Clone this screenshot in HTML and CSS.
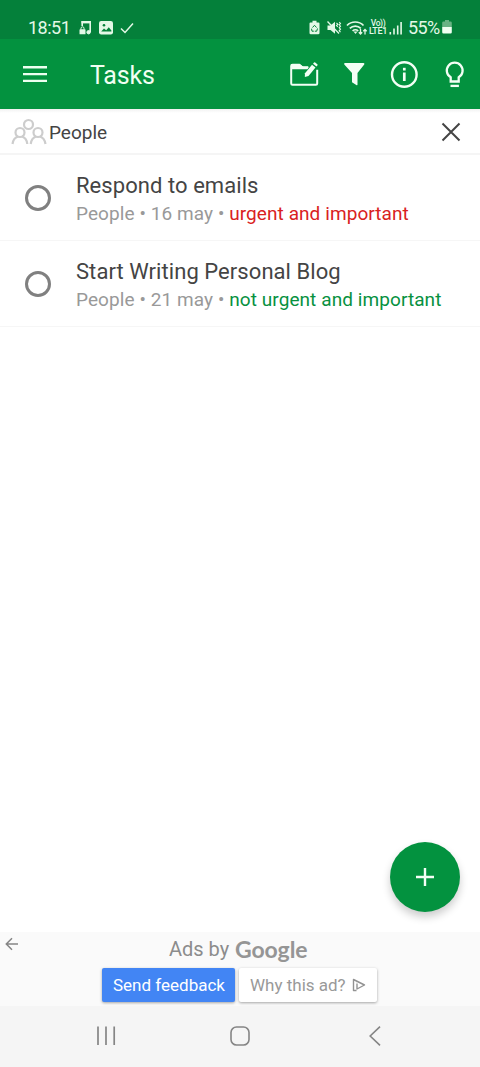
FILE: index.html
```html
<!DOCTYPE html>
<html lang="en">
<head>
<meta charset="utf-8">
<title>Tasks</title>
<link rel="stylesheet" href="styles.css">
</head>
<body>
<div class="screen">
  <div class="status">
    <span class="clock">18:51</span>
    <svg class="status-left" width="56" height="18" viewBox="0 0 56 18" fill="none" stroke="#e4f8e7" stroke-width="1.6">
      <path d="M4.200 7V2.800h8V13"/><path d="M3.500 3.200h9.500" stroke-width="2.400"/><circle cx="10.600" cy="13.200" r="1.700" fill="#e4f8e7" stroke-width="1"/>
      <path d="M3 10.500V9.300a1.500 1.500 0 0 1 3 0v1.200" stroke-width="1"/><rect x="1.500" y="10.300" width="6" height="5" rx=".6" fill="#e4f8e7" stroke="none"/>
      <rect x="21" y="2" width="14" height="13.500" rx="2.200" fill="#e4f8e7" stroke="none"/><circle cx="26" cy="6.200" r="1.300" fill="#04813a" stroke="none"/><path d="M23.200 12.400l2.800-3 2.200 1.800 2.600-3 2.600 3.200v1z" fill="#04813a" stroke="none"/>
      <path d="M43 9.500l4 4L55 4.500" stroke-width="1.500"/>
    </svg>
    <svg class="status-mid" width="60" height="18" viewBox="0 0 60 18" fill="none" stroke="#e4f8e7" stroke-width="1.5">
      <path d="M3.500 1.800h4v1.700h2a1 1 0 0 1 1 1V14a1.300 1.300 0 0 1-1.300 1.300H1.800A1.300 1.300 0 0 1 .5 14V4.500a1 1 0 0 1 1-1h2z" fill="#e4f8e7" stroke="none"/>
      <path d="M3.500 8.500l2-2.200 2 2.200M8.500 9.500l-.8 2.700H5.800M4.800 12.200H3l-.5-2.500" stroke="#04813a" stroke-width="1"/>
      <path d="M18.500 6.500h3l4.500-3.700v12l-4.500-3.900h-3z" fill="#e4f8e7" stroke="none"/><path d="M18.500 2.500l11.500 12" stroke-width="1.300"/><path d="M27.500 4l1.300 1.300-1.300 1.300 1.300 1.300M30.200 3l1.300 1.400-1.300 1.400 1.300 1.400-1.300 1.500 1.300 1.500-1.300 1.500 1.300 1.500" stroke-width="1.100"/>
      <path d="M38 6.500a11.500 11.500 0 0 1 16.500 0M40.800 9.300a7.800 7.800 0 0 1 11 0M43.600 12a4 4 0 0 1 5.600 0" stroke-width="1.700"/><path d="M44.500 12.500l2 2.500 2-2.500z" fill="#e4f8e7" stroke="none"/>
      <path d="M51.500 10v5m-1.700-1.700l1.700 1.700 1.700-1.700M56 15.500v-5m-1.700 1.700l1.700-1.700 1.700 1.700" stroke-width="1.300"/>
    </svg>
    <div class="volte"><span class="vo">Vo))</span><span class="lte">LTE1</span></div>
    <svg class="signal" width="14" height="14" viewBox="0 0 14 14" fill="#e4f8e7"><path d="M.5 11h1.600v2.500H.5zM4.200 7.500h1.600v6H4.200zM7.900 4.500h1.600v9H7.900zM11.300 1h1.600v12.500h-1.600z"/></svg>
    <span class="percent">55%</span>
    <svg class="battery" width="10" height="16" viewBox="0 0 10 16"><path d="M3 1h4v1.500h1.500a1.300 1.300 0 0 1 1.300 1.300V8H.2V3.800a1.300 1.300 0 0 1 1.300-1.300H3z" fill="#69b384"/><path d="M.2 8h9.600v5.200a1.300 1.300 0 0 1-1.300 1.300h-7A1.300 1.300 0 0 1 .2 13.200z" fill="#f0fff2"/></svg>
  </div>
  <div class="toolbar">
    <svg class="menu" width="24" height="18" viewBox="0 0 24 18" fill="#ecfff0"><path d="M0 1h24v2.400H0zM0 7.900h24v2.400H0zM0 14.700h24v2.400H0z"/></svg>
    <span class="title">Tasks</span>
    <svg class="actions" width="176" height="32" viewBox="0 0 176 32" fill="none" stroke="#f3fff5" stroke-width="2.400">
      <g transform="translate(-1 .8)"><path d="M19 8.500H13L10.300 6H3.500a1.300 1.300 0 0 0-1.300 1.300v17.400a1.300 1.300 0 0 0 1.300 1.300h23.400a1.300 1.300 0 0 0 1.300-1.300V11" stroke-width="2"/><path d="M2 5.500h9l3.500 2.500H20l-1.500 2.500H2z" fill="#f3fff5" stroke="none"/>
      <path d="M16 14.500l7-8.600 3.500 2.800-7 8.600-3.700 1z" fill="#f3fff5" stroke="none"/><path d="M24 5l1-1.200a.9.900 0 0 1 1.200-.1L28.300 5.400a.9.900 0 0 1 .1 1.200l-1 1.200z" fill="#f3fff5" stroke="none"/></g>
      <path d="M55 5h18.500a1 1 0 0 1 .7 1.600L67.500 15v11.500q0 1.300-1.200.5L62 24.300V15L54.300 6.600Q53.500 5 55 5z" fill="#f3fff5" stroke="none"/>
      <circle cx="114.300" cy="16.500" r="12.300"/><path d="M114.300 14.500v8.500" stroke-width="2.700"/><path d="M114.300 9.800v2.700" stroke-width="2.700"/>
      <path d="M160.700 23.500v-4.200a7.900 7.900 0 1 1 8 0v4.200z" stroke-width="2.300"/><path d="M160.500 27.900h8.400" stroke-width="2.300"/>
    </svg>
  </div>
  <div class="filter">
    <svg width="36" height="28" viewBox="0 0 36 28" fill="none" stroke="#cdcdcd" stroke-width="2.200"><circle cx="17.500" cy="6.500" r="4.500"/><circle cx="9" cy="14.500" r="4.500"/><circle cx="27" cy="14.500" r="4.500"/><path d="M1.500 26c.5-4 2.500-6.500 5.500-7.500M11 18.500c3 1 4.900 3.500 5.300 7.500M19.700 26c.5-4 2.300-6.500 5.300-7.500M29 18.500c3 1 4.900 3.500 5.500 7.500"/></svg>
    <span class="filter-name">People</span>
    <svg class="close" width="22" height="22" viewBox="0 0 22 22" fill="none" stroke="#444" stroke-width="2"><path d="M2.500 2.500l17 17M19.500 2.500l-17 17"/></svg>
  </div>
  <div class="task">
    <span class="check"></span>
    <div class="task-text">
      <div class="name">Respond to emails</div>
      <div class="meta"><span class="context">People • 16 may • </span><span class="urgent">urgent and important</span></div>
    </div>
  </div>
  <div class="task">
    <span class="check"></span>
    <div class="task-text">
      <div class="name">Start Writing Personal Blog</div>
      <div class="meta"><span class="context">People • 21 may • </span><span class="calm">not urgent and important</span></div>
    </div>
  </div>
  <div class="space">
    <div class="fab"><svg width="20" height="20" viewBox="0 0 20 20" stroke="#f4fff6" stroke-width="2.400"><path d="M10 1v18M1 10h18"/></svg></div>
  </div>
  <div class="ad">
    <svg class="ad-back" width="14" height="14" viewBox="0 0 14 14" fill="none" stroke="#858585" stroke-width="1.500"><path d="M13 7H1.500M7 1.300L1.300 7 7 12.700"/></svg>
    <div class="ad-title"><span class="ads-by">Ads by</span><span class="google">Google</span></div>
    <div class="ad-buttons">
      <div class="feedback"><span>Send feedback</span></div>
      <div class="why"><span>Why this ad?</span><svg width="14" height="14" viewBox="0 0 14 14" fill="none" stroke="#929292" stroke-width="1.400" stroke-linejoin="round"><path d="M4.500 12.500H1.500v-11L12.500 7 5 11V5.500M5 3.200v1"/></svg></div>
    </div>
  </div>
  <div class="nav">
    <svg width="20" height="20" viewBox="0 0 20 20" stroke="#858585" stroke-width="1.700"><path d="M2 .5v18.500M10 .5v18.500M18.200 .5v18.500"/></svg>
    <svg class="home" width="20" height="20" viewBox="0 0 20 20" fill="none" stroke="#858585" stroke-width="1.600"><rect x="1" y="1" width="18" height="18" rx="5.500"/></svg>
    <svg class="back" width="12" height="20" viewBox="0 0 12 20" fill="none" stroke="#858585" stroke-width="1.600"><path d="M11 .7L1.200 10l9.800 9.300"/></svg>
  </div>
</div>
</body>
</html>
```
FILE: styles.css
```css
* { box-sizing: border-box; }
body { margin: 0; font-family: Roboto, "Liberation Sans", sans-serif; background: #fff; }
svg { display: block; flex: none; }
span { white-space: pre; }
.screen { width: 480px; height: 1067px; display: flex; flex-direction: column; overflow: hidden; }
.status { height: 39px; flex: none; display: flex; align-items: flex-start; padding: 17px 0 0 28px; background: #04803a; color: #e4f8e7; }
.clock { width: 50px; font-size: 18px; line-height: 21px; letter-spacing: -.5px; }
.status-left { margin-top: 2px; }
.status-mid { margin: 2px 0 0 175px; }
.volte { width: 20px; height: 20px; margin-left: -1px; display: flex; flex-direction: column; align-items: center; font-size: 9px; line-height: 8px; font-weight: 500; padding-top: 2px; }
.vo { font-size: 8.5px; letter-spacing: -.4px; }
.lte { letter-spacing: -.3px; }
.signal { margin: 4px 0 0 1px; }
.percent { width: 33px; margin-left: 5px; font-size: 18px; line-height: 21px; letter-spacing: -.6px; }
.battery { margin: 2px 0 0 1px; }
.toolbar { height: 70px; flex: none; display: flex; align-items: center; padding: 0 0 0 23px; background: #03923f; color: #f0fff2; }
.title { width: 199px; margin-left: 43px; font-size: 25px; line-height: 30px; letter-spacing: -.2px; padding-top: 3px; }
.actions { margin-left: 1px; }
.filter { height: 46px; flex: none; display: flex; align-items: center; padding: 1px 18px 0 11px; border-bottom: 2px solid #f5f5f5; background: linear-gradient(#f1f1f1, #fff 4px); }
.filter-name { margin: 3px auto 0 2px; font-size: 19px; line-height: 22px; color: #444; }
.task { height: 86px; flex: none; display: flex; border-bottom: 1px solid #f6f6f6; }
.check { width: 26px; height: 26px; margin: 30px 25px 0 25px; flex: none; border: 3px solid #808080; border-radius: 50%; }
.task-text { padding-top: 17px; }
.name { font-size: 22px; line-height: 27px; letter-spacing: .06px; color: #444; white-space: nowrap; }
.meta { margin-top: 3px; font-size: 19px; line-height: 24px; letter-spacing: .08px; color: #999; white-space: nowrap; }
.urgent { color: #d9211e; }
.calm { color: #07913f; }
.space { flex: 1; display: flex; align-items: flex-end; justify-content: flex-end; padding: 0 20px 20px 0; }
.fab { width: 70px; height: 70px; display: flex; align-items: center; justify-content: center; border-radius: 50%; background: #03923f; box-shadow: 0 5px 9px rgba(0,0,0,.2); }
.ad { height: 74px; flex: none; display: grid; grid-template-columns: 102px 1fr; grid-template-rows: 36px 38px; background: #fafafa; }
.ad-back { margin: 5px 0 0 5px; }
.ad-title { display: flex; padding: 5px 0 0 67px; line-height: 24px; color: #8c8c8c; }
.ads-by { width: 66px; font-size: 20px; }
.google { font-family: Lato, sans-serif; font-size: 23px; font-weight: 700; letter-spacing: -.1px; color: #959595; }
.ad-buttons { grid-column: 2; display: flex; gap: 4px; }
.feedback, .why { height: 34px; display: flex; align-items: center; border-radius: 2px; font-size: 17px; line-height: 20px; box-shadow: 0 1px 3px rgba(0,0,0,.35); }
.feedback { width: 133px; padding-left: 11px; background: #4285f4; color: #fff; }
.why { width: 138px; padding-left: 11px; background: #fff; color: #999; }
.why svg { margin-left: 6px; }
.nav { flex: none; height: 61px; display: flex; align-items: flex-start; padding: 20px 0 0 96px; background: #f5f5f5; }
.home { margin-left: 114px; }
.back { margin-left: 119px; }
```
